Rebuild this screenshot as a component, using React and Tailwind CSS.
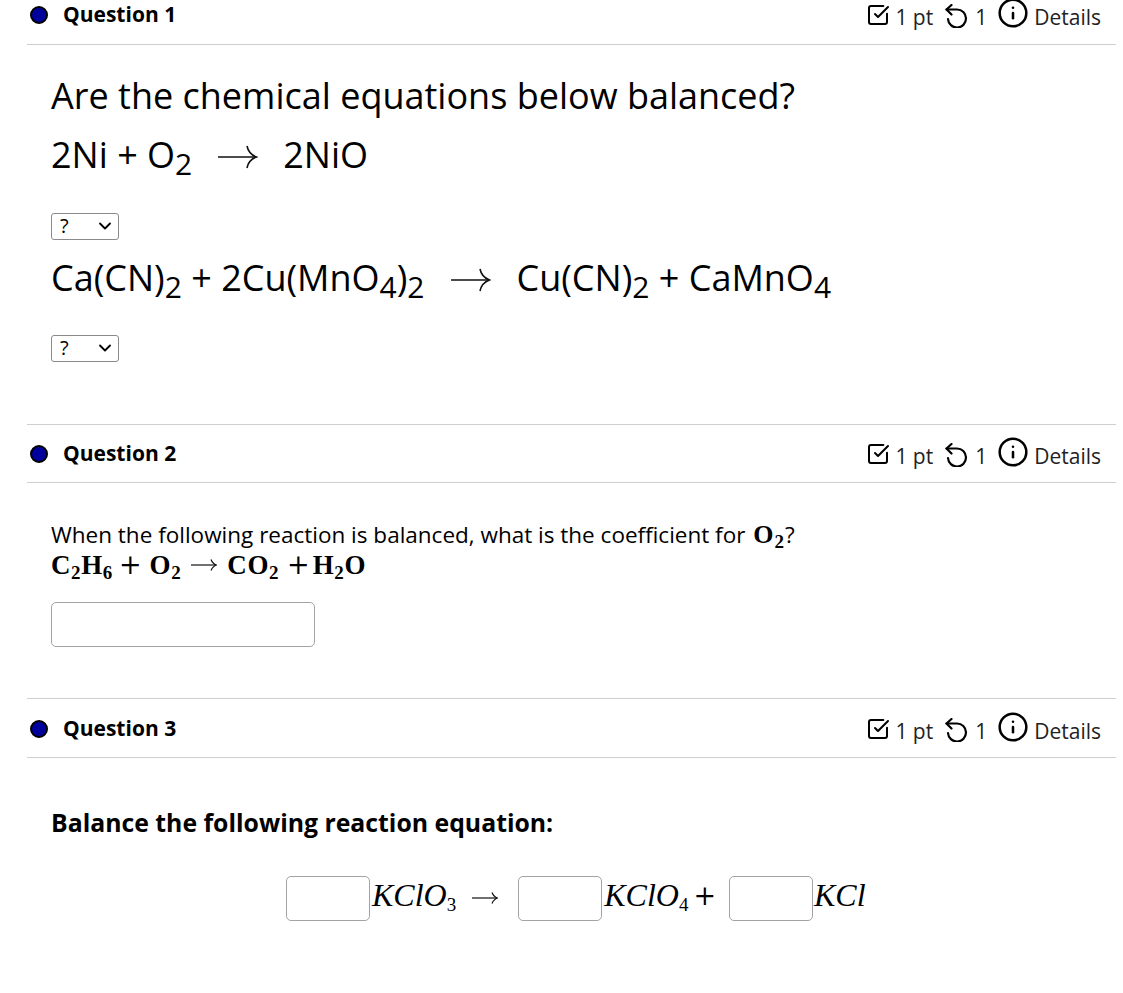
import React from 'react';
import { SquareCheckBig, ChevronDown, Info } from 'lucide-react';

const Header = ({ n, className }) => (
    <div className={`flex items-center justify-between border-b border-[#cfcfcf] h-[29px] box-content pl-[3px] pr-[15px] ${className}`}>
        <div className="flex items-center">
            <span className="w-[18px] h-[18px] rounded-full bg-[#00009c] border-2 border-black" />
            <span className="ml-[15px] text-[21px] font-bold text-black">Question {n}</span>
        </div>
        <div className="flex items-center text-[21px] text-[#222]">
            <SquareCheckBig size={24} strokeWidth={2} className="text-black mt-[1px]" />
            <span className="ml-[5px] mt-[7px]">1 pt</span>
            <svg width="24" height="24" viewBox="0 0 24 24" fill="none" stroke="black" strokeWidth="2.2" strokeLinecap="round" strokeLinejoin="round" className="ml-[11px] mt-[2px]">
                <path d="M2.5 5.5 H13 a9 9 0 1 1 -9 9.5" />
                <path d="M7.5 1 L2.5 5.5 L7.5 10.5" />
            </svg>
            <span className="ml-[7px] mt-[7px]">1</span>
            <Info size={32} strokeWidth={1.9} className="ml-[10px] -mt-[3px] text-black" />
            <span className="ml-[5px] mt-[7px]">Details</span>
        </div>
    </div>
);

const BigArrow = ({ className }) => (
    <svg width="40" height="24" viewBox="0 0 40 24" fill="none" stroke="#111" strokeWidth="1.6" className={className}>
        <path d="M0 12 H38" />
        <path d="M29 1 C30 6 33 10 38.5 12 C33 14 30 18 29 23" />
    </svg>
);

const MathArrow = ({ className }) => (
    <svg width="26" height="14" viewBox="0 0 26 14" fill="none" stroke="#111" strokeWidth="1.2" className={className}>
        <path d="M0 7 H25" />
        <path d="M20 1.5 C21 4 22.5 6 25.5 7 C22.5 8 21 10 20 12.5" />
    </svg>
);

const Plus = ({ className }) => (
    <span className={`font-['DejaVu_Serif',serif] font-normal not-italic tracking-normal text-[27px] ${className}`}>+</span>
);

const Sub = ({ children }) => <sub className="text-[30px] -bottom-[7px] leading-none">{children}</sub>;
const MSub = ({ children }) => <sub className="text-[19px] -bottom-[5px] leading-none not-italic">{children}</sub>;

const Pick = ({ className }) => (
    <div className={`relative w-[68px] h-[27px] ${className}`}>
        <select className="block w-full h-full appearance-none border border-[#8a8a8a] rounded-[3px] bg-white text-[20px] leading-none pl-[8px] pb-[2px] text-black">
            <option>?</option>
        </select>
        <ChevronDown size={20} strokeWidth={2.2} className="absolute right-[4px] top-[3px] text-black pointer-events-none" />
    </div>
);

const Blank = ({ className }) => (
    <input type="text" className={`block h-[45px] border border-[#a3a3a3] rounded-[5px] bg-white ${className}`} />
);

export default function App() {
    return (
        <div className="min-h-[993px] bg-white pl-[27px] pr-[7px] font-['Open_Sans',sans-serif] text-black">
            <section>
                <Header n={1} className="pb-[15px]" />
                <div className="pl-[24px] pt-[21px] h-[379px] text-[36px] leading-[60px]">
                    <p>Are the chemical equations below balanced?</p>
                    <div className="flex items-center h-[60px] -mt-[1px]">
                        <span>2Ni + O<Sub>2</Sub></span>
                        <BigArrow className="ml-[26px] mt-[4px]" />
                        <span className="ml-[25px]">2NiO</span>
                    </div>
                    <Pick className="mt-[28px]" />
                    <div className="flex items-center h-[60px] mt-[8px]">
                        <span>Ca(CN)<Sub>2</Sub> + 2Cu(MnO<Sub>4</Sub>)<Sub>2</Sub></span>
                        <BigArrow className="ml-[26px] mt-[4px]" />
                        <span className="ml-[26px]">Cu(CN)<Sub>2</Sub> + CaMnO<Sub>4</Sub></span>
                    </div>
                    <Pick className="mt-[27px]" />
                </div>
            </section>

            <section className="border-t border-[#cfcfcf]">
                <Header n={2} className="pt-[14px] pb-[14px]" />
                <div className="pl-[24px] pt-[36px] h-[215px] text-[22.5px] leading-[32px]">
                    <p>
                        When the following reaction is balanced, what is the coefficient for{' '}
                        <span className="font-['Liberation_Serif',serif] font-bold text-[26px] tracking-[1px] ml-[2px]">O<MSub>2</MSub></span>?
                    </p>
                    <div className="flex items-center h-[30px] -mt-[1px] font-['Liberation_Serif',serif] font-bold text-[27px] tracking-[0.6px]">
                        <span>C<MSub>2</MSub>H<MSub>6</MSub></span>
                        <Plus className="ml-[6px]" />
                        <span className="ml-[8px]">O<MSub>2</MSub></span>
                        <MathArrow className="ml-[10px]" />
                        <span className="ml-[10px]">CO<MSub>2</MSub></span>
                        <Plus className="ml-[8px]" />
                        <span className="ml-[3px]">H<MSub>2</MSub>O</span>
                    </div>
                    <Blank className="w-[264px] mt-[22px]" />
                </div>
            </section>

            <section className="border-t border-[#cfcfcf]">
                <Header n={3} className="pt-[15px] pb-[14px]" />
                <div className="pl-[24px] pt-[46px]">
                    <p className="text-[24.8px] font-bold leading-[36px]">Balance the following reaction equation:</p>
                    <div className="flex items-center mt-[35px] ml-[235px] font-['Liberation_Serif',serif] text-[32px] leading-[40px] italic">
                        <Blank className="w-[84px]" />
                        <span className="ml-[2px] mb-[6px]">KClO<MSub>3</MSub></span>
                        <MathArrow className="ml-[16px] mr-[20px]" />
                        <Blank className="w-[84px]" />
                        <span className="ml-[2px] mb-[6px]">KClO<MSub>4</MSub></span>
                        <Plus className="ml-[5px] mr-[13px] mb-[4px]" />
                        <Blank className="w-[84px]" />
                        <span className="ml-[1px] mb-[6px]">KCl</span>
                    </div>
                </div>
            </section>
        </div>
    );
}
